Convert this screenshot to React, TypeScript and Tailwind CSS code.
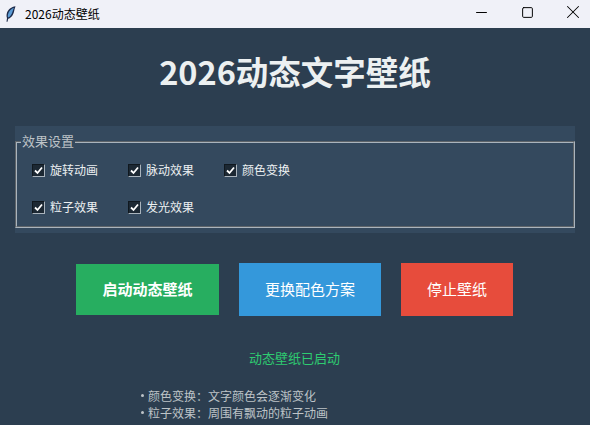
import React from 'react';
import { Minus, Square, X } from 'lucide-react';

const effects = ['旋转动画', '脉动效果', '颜色变换', '粒子效果', '发光效果'];

const tips = ['颜色变换：文字颜色会逐渐变化', '粒子效果：周围有飘动的粒子动画'];

function Feather() {
  return (
    <svg width="10" height="16" viewBox="0 0 10 16" className="shrink-0">
      <path d="M9.500 0.300C5.500 0.800 1.800 3.500 .8 7.500c-.4 1.800-.3 3.200.2 4.500L0.500 15.700h1l.7-3c3-.6 5-3.800 5.800-7 .4-1.800.8-3.800 1.500-5.400z" fill="#1c2a4a" />
      <path d="M8 1.800C5 2.800 2.800 5.200 2 8.300c-.3 1.300-.3 2.300 0 3.300 2.200-1 3.800-3.600 4.600-6.200.4-1.200.8-2.500 1.400-3.600z" fill="#5b9bd5" />
    </svg>
  );
}

function Effect({ label }: { label: string }) {
  return (
    <label className="flex items-center gap-[5px] text-xs text-[#ecf0f1]">
      <span className="flex h-[13px] w-[13px] items-center justify-center border border-b-[#aab4bd] border-l-[#10181f] border-r-[#aab4bd] border-t-[#10181f] bg-[#1c2833]">
        <svg width="9" height="9" viewBox="0 0 9 9">
          <path d="M1 4.500L3.500 7L8 1.500" fill="none" stroke="#ffffff" strokeWidth="1.800" />
        </svg>
      </span>
      {label}
    </label>
  );
}

export default function App() {
  return (
    <div className="flex h-[425px] w-[590px] flex-col overflow-hidden bg-[#2c3e50] font-['Noto_Sans_CJK_SC','Liberation_Sans',sans-serif]">
      <div className="flex h-7 items-center justify-between bg-[#f0f1f8] pl-[6px] text-black">
        <div className="flex items-center gap-[9px] text-xs">
          <Feather />
          <span>2026动态壁纸</span>
        </div>
        <div className="-mr-[6px] flex pb-1">
          <div className="flex h-6 w-[46px] items-center justify-center">
            <Minus size={17} strokeWidth={1.4} />
          </div>
          <div className="flex h-6 w-[46px] items-center justify-center">
            <Square size={13} strokeWidth={1.8} />
          </div>
          <div className="flex h-6 w-[46px] items-center justify-center">
            <X size={22} strokeWidth={1.1} />
          </div>
        </div>
      </div>

      <h1 className="mt-[19px] h-12 text-center text-[32.5px] leading-[48px] font-bold text-[#ecf0f1]">2026动态文字壁纸</h1>

      <div className="ml-[15px] mt-[31px] h-[107px] w-[560px] bg-[#34495e]">
        <fieldset className="mt-[8px] h-[94px] w-[560px] border-2 border-[#aab4bd] pl-[15px] [border-style:groove]">
          <legend className="-ml-[11px] px-px text-[13px] leading-[15px] text-[#bdc3c7]">
            <span className="block -translate-y-px">效果设置</span>
          </legend>
          <div className="mt-[13px] grid grid-cols-[96px_96px_96px] gap-y-[21px]">
            {effects.map((e) => (
              <Effect key={e} label={e} />
            ))}
          </div>
        </fieldset>
      </div>

      <div className="ml-[76px] mt-[30px] flex items-center gap-5 text-[15px] text-white">
        <button className="h-[51px] w-[143px] bg-[#27ae60] font-bold">启动动态壁纸</button>
        <button className="h-[53px] w-[142px] bg-[#3498db]">更换配色方案</button>
        <button className="h-[53px] w-[112px] bg-[#e74c3c]">停止壁纸</button>
      </div>

      <p className="-ml-px mt-[34px] text-center text-[13px] leading-4 text-[#2ecc71]">动态壁纸已启动</p>

      <ul className="ml-[141px] mt-[21px] text-xs leading-[17px] text-[#bdc3c7]">
        {tips.map((t) => (
          <li key={t} className="flex items-center gap-1">
            <span className="h-[3px] w-[3px] rounded-full bg-[#bdc3c7]" />
            {t}
          </li>
        ))}
      </ul>
    </div>
  );
}
